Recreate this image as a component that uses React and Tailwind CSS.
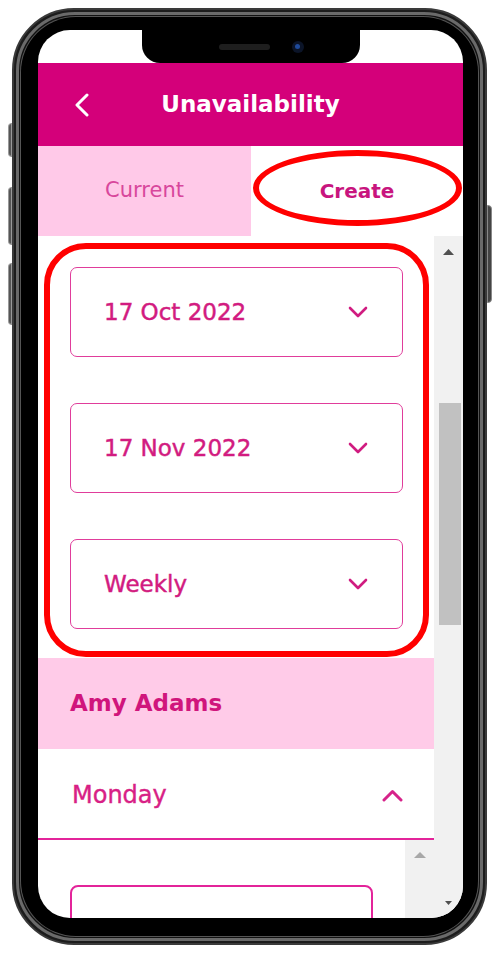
import React from 'react';

const pink = '#d4007a';

const ChevronDown = () => (
  <svg width="20" height="12" viewBox="0 0 20 12" fill="none">
    <polyline points="2,2 10,10 18,2" stroke="#d01c80" strokeWidth="2.6" strokeLinecap="round" strokeLinejoin="round" />
  </svg>
);

const ChevronUp = () => (
  <svg width="21" height="13" viewBox="0 0 21 13" fill="none">
    <polyline points="2,11 10.5,2.5 19,11" stroke="#d6238a" strokeWidth="3" strokeLinecap="round" strokeLinejoin="round" />
  </svg>
);

const SelectBox = ({ label }) => (
  <div className="h-[90px] shrink-0 rounded-[7px] border-[1.5px] border-[#e03d9b] flex items-center justify-between pl-[33px] pr-[34px]">
    <span className="text-[23px] text-[#d21b80] [-webkit-text-stroke:0.45px_#d21b80]">{label}</span>
    <ChevronDown />
  </div>
);

const Arrow = ({ up = true, color = '#505050', w = 10, h = 5 }) => (
  <svg width={w} height={h} viewBox="0 0 10 5" preserveAspectRatio="none">
    {up ? <polygon points="0,5 5,0 10,5" fill={color} /> : <polygon points="0,0 5,5 10,0" fill={color} />}
  </svg>
);

export default function App() {
  return (
    <div className="w-[500px] h-[962px] bg-white pt-[8px] pl-[12px]" style={{ fontFamily: '"DejaVu Sans", Inter, sans-serif' }}>
      <div className="relative w-[475px] h-[937px]">
        {/* side buttons */}
        <div className="absolute left-[-4px] top-[115px] w-[4px] h-[34px] rounded-l-sm bg-[#555] border border-[#999]" />
        <div className="absolute left-[-4px] top-[179px] w-[4px] h-[58px] rounded-l-sm bg-[#555] border border-[#999]" />
        <div className="absolute left-[-4px] top-[255px] w-[4px] h-[62px] rounded-l-sm bg-[#555] border border-[#999]" />
        <div className="absolute right-[-5px] top-[197px] w-[5px] h-[98px] rounded-r-sm bg-[#444] border border-[#888]" />

        <div className="w-full h-full rounded-[62px] border-2 border-[#3a3a3a] bg-[#1c1c1c] p-[2px]">
          <div className="w-full h-full rounded-[59px] border-[3px] border-[#6a6a6a] bg-[#111] p-[2px]">
            <div className="w-full h-full rounded-[55px] bg-black ring-1 ring-[#555] pt-[13px] pl-[17px] pr-[15px] pb-[18px]">
              <div className="relative w-[425px] h-[888px] rounded-[32px] overflow-hidden bg-white flex flex-col">
                {/* notch */}
                <div className="absolute top-0 left-[104px] w-[218px] h-[33px] bg-black rounded-b-[18px] flex items-center justify-center gap-[22px] pl-[20px]">
                  <div className="w-[51px] h-[6px] rounded-full bg-[#1e1e1e]" />
                  <div className="w-[12px] h-[12px] rounded-full bg-[#0b1428] flex items-center justify-center">
                    <div className="w-[5px] h-[5px] rounded-full bg-[#1f4a9a]" />
                  </div>
                </div>
                <div className="h-[33px] shrink-0" />

                {/* header */}
                <div className="h-[83px] shrink-0 grid grid-cols-[80px_1fr_80px] items-center" style={{ background: pink }}>
                  <div className="pl-[36px] flex items-center">
                    <svg width="16" height="24" viewBox="0 0 16 24" fill="none">
                      <polyline points="13,2 3,12 13,22" stroke="white" strokeWidth="3" strokeLinecap="round" strokeLinejoin="round" />
                    </svg>
                  </div>
                  <div className="text-center text-white text-[23px] font-bold">Unavailability</div>
                  <div />
                </div>

                {/* tabs */}
                <div className="relative h-[90px] shrink-0 flex">
                  <div className="w-[213px] bg-[#ffc9e8] flex items-center justify-center text-[21px] text-[#d8479c]">Current</div>
                  <div className="flex-1 flex items-center justify-center text-[20px] font-bold text-[#c8157e]">Create</div>
                  <div className="absolute left-[215px] top-[4px] w-[209px] h-[76px] rounded-[50%] border-[6px] border-[#ff0000]" />
                </div>

                {/* body */}
                <div className="flex-1 flex min-h-0">
                  <div className="w-[396px] flex flex-col min-h-0">
                    <div className="shrink-0 mt-[7px] ml-[6px] w-[385px] h-[414px] rounded-[42px] border-[6px] border-[#ff0000] pt-[18px] pl-[20px] pr-[20px] flex flex-col gap-[46px]">
                      <SelectBox label="17 Oct 2022" />
                      <SelectBox label="17 Nov 2022" />
                      <SelectBox label="Weekly" />
                    </div>
                    <div className="shrink-0 mt-[1px] h-[91px] bg-[#ffcbe8] flex items-center pl-[32px]">
                      <span className="text-[23px] font-bold text-[#d0157c]">Amy Adams</span>
                    </div>
                    <div className="shrink-0 h-[91px] border-b-2 border-[#e3249a] flex items-center justify-between pl-[34px] pr-[31px] pt-[3px]">
                      <span className="text-[24px] text-[#d81f86] [-webkit-text-stroke:0.4px_#d81f86]">Monday</span>
                      <ChevronUp />
                    </div>
                    <div className="flex-1 min-h-0 overflow-hidden flex">
                      <div className="w-[367px] pt-[45px] pl-[32px]">
                        <div className="w-[303px] h-[60px] border-2 border-[#e3249a] rounded-t-[8px]" />
                      </div>
                      <div className="flex-1 bg-[#f1f1f1] flex justify-center pt-[12px]">
                        <Arrow color="#a8a8a8" w={12} h={6} />
                      </div>
                    </div>
                  </div>
                  <div className="flex-1 bg-[#f1f1f1] flex flex-col items-center pt-[13px] pb-[13px]">
                    <Arrow color="#505050" w={11} h={6} />
                    <div className="shrink-0 mt-[148px] w-[22px] ml-[3px] h-[222px] bg-[#c1c1c1]" />
                    <div className="flex-1" />
                    <Arrow up={false} color="#505050" w={7} h={4} />
                  </div>
                </div>
              </div>
            </div>
          </div>
        </div>
      </div>
    </div>
  );
}
